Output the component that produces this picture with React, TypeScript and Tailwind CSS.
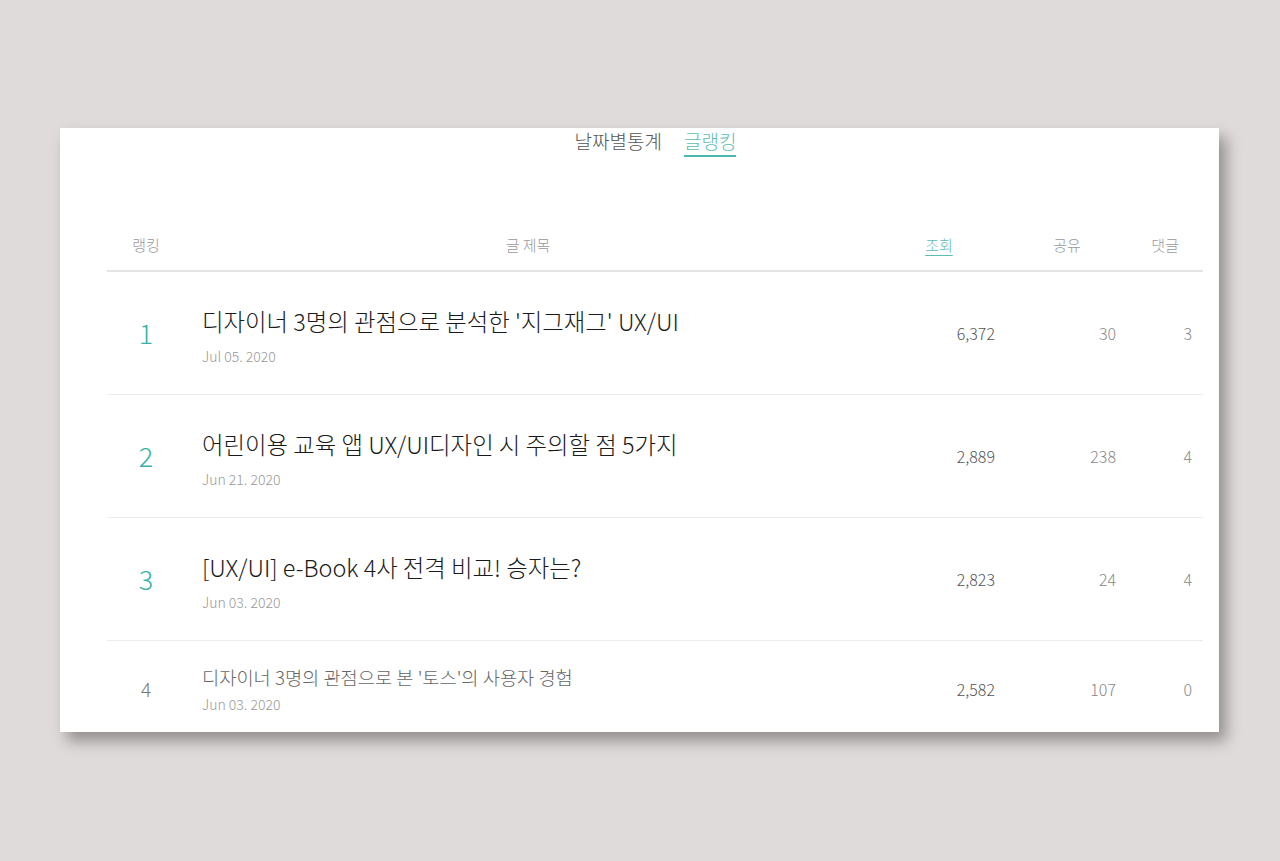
import React from 'react';

type Post = {
  rank: number;
  title: string;
  date: string;
  views: string;
  shares: string;
  comments: string;
};

const POSTS: Post[] = [
  { rank: 1, title: "디자이너 3명의 관점으로 분석한 '지그재그' UX/UI", date: 'Jul 05. 2020', views: '6,372', shares: '30', comments: '3' },
  { rank: 2, title: '어린이용 교육 앱 UX/UI디자인 시 주의할 점 5가지', date: 'Jun 21. 2020', views: '2,889', shares: '238', comments: '4' },
  { rank: 3, title: '[UX/UI] e-Book 4사 전격 비교! 승자는?', date: 'Jun 03. 2020', views: '2,823', shares: '24', comments: '4' },
  { rank: 4, title: "디자이너 3명의 관점으로 본 '토스'의 사용자 경험", date: 'Jun 03. 2020', views: '2,582', shares: '107', comments: '0' },
];

const FONT = { fontFamily: '"Noto Sans CJK KR", "Noto Sans", sans-serif' };

const Row: React.FC<{ post: Post }> = ({ post }) => {
  const top = post.rank <= 3;
  return (
    <div className={`flex items-center border-b border-[#ececec] ${top ? 'h-[123px]' : 'h-[97px]'}`}>
      <div
        className={`w-[78px] shrink-0 text-center font-light ${
          top ? 'text-[27px] text-[#35b3a6]' : 'text-[19px] text-[#777]'
        }`}
      >
        {post.rank}
      </div>
      <div className={`flex-1 pl-[17px] flex flex-col ${top ? 'mt-[5px]' : 'mt-0'}`}>
        <div
          className={`font-light ${
            top ? 'text-[23.4px] leading-[30px] text-[#1a1a1a]' : 'text-[18.7px] leading-[26px] text-[#666]'
          }`}
        >
          {post.title}
        </div>
        <div className={`text-[14px] leading-[20px] font-light text-[#999] ${top ? 'mt-[10px]' : 'mt-[4px]'}`}>
          {post.date}
        </div>
      </div>
      <div className="w-[136px] shrink-0 text-right pr-[12px] text-[16px] font-light text-[#555]">{post.views}</div>
      <div className="w-[120px] shrink-0 text-right pr-[11px] text-[16px] font-light text-[#888]">{post.shares}</div>
      <div className="w-[76px] shrink-0 text-right pr-[11px] text-[16px] font-light text-[#888]">{post.comments}</div>
    </div>
  );
};

const App: React.FC = () => {
  return (
    <div className="min-h-screen w-full bg-[#dfdbda] pt-[128px] pl-[60px]" style={FONT}>
      <div className="w-[1159px] h-[604px] bg-white overflow-hidden shadow-[7px_9px_14px_rgba(0,0,0,0.35)]">
        {/* tabs */}
        <div className="flex justify-center items-start gap-[22px] pl-[32px] pt-[2px]">
          <div className="text-[19px] leading-[22px] font-light text-[#555] pb-[5px]">날짜별통계</div>
          <div className="text-[19px] leading-[22px] font-light text-[#5cbdb2] pb-[3px] border-b-2 border-[#4db8ad]">
            글랭킹
          </div>
        </div>

        {/* table */}
        <div className="ml-[47px] w-[1096px] mt-[63px]">
          <div className="flex items-center h-[52px] border-b-2 border-[#e4e4e4] text-[15px] font-light text-[#999]">
            <div className="w-[78px] shrink-0 text-center">랭킹</div>
            <div className="flex-1 text-center">글 제목</div>
            <div className="w-[136px] shrink-0 text-center">
              <span className="text-[#5cbdb2] underline underline-offset-[4px]">조회</span>
            </div>
            <div className="w-[120px] shrink-0 text-center">공유</div>
            <div className="w-[76px] shrink-0 text-center">댓글</div>
          </div>
          {POSTS.map((p) => (
            <Row key={p.rank} post={p} />
          ))}
        </div>
      </div>
    </div>
  );
};

export default App;
